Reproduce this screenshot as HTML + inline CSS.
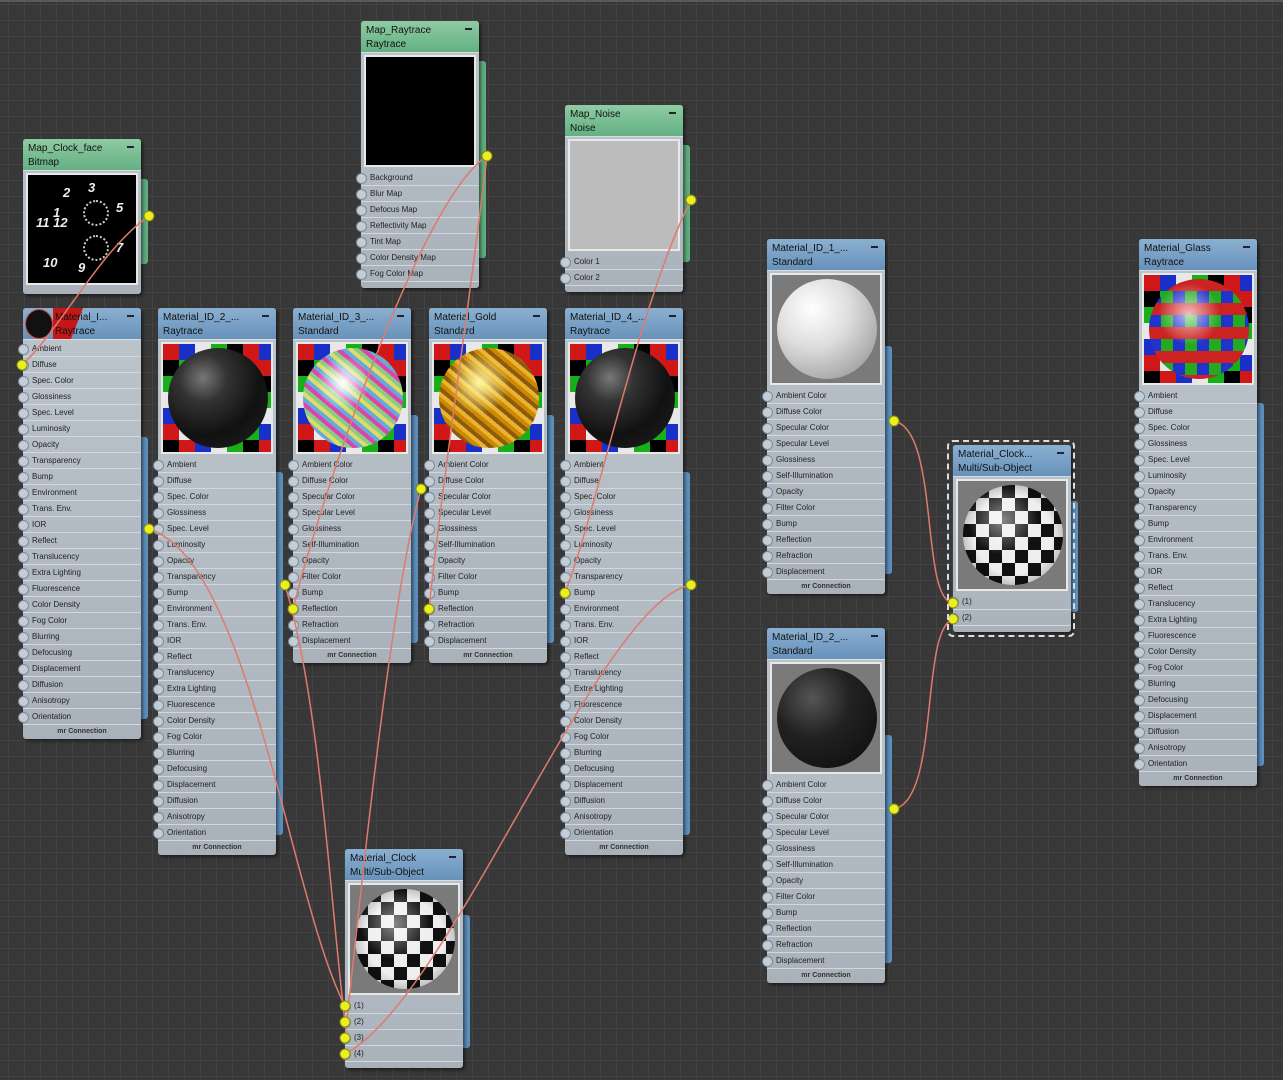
<!DOCTYPE html>
<html><head><meta charset="utf-8">
<style>
html,body{margin:0;padding:0}
body{width:1283px;height:1080px;overflow:hidden;position:relative;
background-color:#383838;
background-image:linear-gradient(#424242 1px,transparent 1px),linear-gradient(90deg,#424242 1px,transparent 1px);
background-size:16px 16px;background-position:8px 4px;
font-family:"Liberation Sans",sans-serif;}
.top{position:absolute;left:0;top:0;width:1283px;height:2px;background:#5a5a5a}
.node{position:absolute;width:118px;background:linear-gradient(#bcc4cc,#a9b1ba);border-radius:3px;box-shadow:2px 2px 3px rgba(0,0,0,.5);}
.hd{height:32px;border-radius:3px 3px 0 0;background:linear-gradient(#8aafd0,#6892bb);border-bottom:1px solid #d6dde4;font-size:10px;color:#111;padding:3px 0 0 5px;box-sizing:border-box;line-height:14px;position:relative}
.hd.g{background:linear-gradient(#8fcba3,#64b083)}
.hd:after{content:"";position:absolute;right:7px;top:7px;width:7px;height:2px;background:#223}
.pv{margin:2px auto 0;width:112px;height:112px;box-sizing:border-box;border:2px solid #e8e8e8;position:relative;overflow:hidden}
.row{height:16px;font-size:8px;color:#222;line-height:16px;padding-left:9px;border-bottom:1px solid #d0d7de;box-sizing:border-box;position:relative}
.row:before{content:"";position:absolute;left:-5px;top:3px;width:9px;height:9px;border-radius:50%;background:#c3cdd8;border:1px solid #7b8a99}
.mr{height:14px;font-size:7px;text-align:center;line-height:14px;color:#333;font-weight:bold}
.tab{position:absolute;width:7px;background:#5c8fbc;border-radius:0 3px 3px 0}
.tab.g{background:#5fae7e}
.sph{position:absolute;border-radius:50%}
</style></head><body>
<div class="top"></div>
<div id="root"></div>
<svg width="1283" height="1080" style="position:absolute;left:0;top:0" fill="none" stroke="#e07a6c" stroke-width="1.5">
<path d="M149,216 C100,250 60,330 22,365"/>
<path d="M487,156 C420,200 320,500 293,609"/>
<path d="M487,156 C470,300 440,500 429,609"/>
<path d="M149,529 C250,560 290,900 345,1006"/>
<path d="M285,585 C320,700 330,900 345,1022"/>
<path d="M421,489 C390,600 360,900 345,1038"/>
<path d="M691,585 C600,600 450,1000 345,1054"/>
<path d="M691,200 C640,300 600,500 565,593"/>
<path d="M894,421 C940,430 920,600 953,603"/>
<path d="M894,809 C940,800 920,630 953,619"/>
<g fill="#e8f020" stroke="#8a8a10" stroke-width="1">
<circle cx="149" cy="216" r="5"/><circle cx="22" cy="365" r="5"/><circle cx="487" cy="156" r="5"/><circle cx="293" cy="609" r="5"/><circle cx="429" cy="609" r="5"/><circle cx="149" cy="529" r="5"/><circle cx="285" cy="585" r="5"/><circle cx="421" cy="489" r="5"/><circle cx="691" cy="585" r="5"/><circle cx="691" cy="200" r="5"/><circle cx="565" cy="593" r="5"/><circle cx="894" cy="421" r="5"/><circle cx="894" cy="809" r="5"/><circle cx="953" cy="603" r="5"/><circle cx="953" cy="619" r="5"/><circle cx="345" cy="1006" r="5"/><circle cx="345" cy="1022" r="5"/><circle cx="345" cy="1038" r="5"/><circle cx="345" cy="1054" r="5"/>
</g>
</svg>
<div style="position:absolute;left:947px;top:440px;width:128px;height:197px;border:2px dashed #ddd;border-radius:6px;box-sizing:border-box"></div>
<script>
const RT=["Ambient","Diffuse","Spec. Color","Glossiness","Spec. Level","Luminosity","Opacity","Transparency","Bump","Environment","Trans. Env.","IOR","Reflect","Translucency","Extra Lighting","Fluorescence","Color Density","Fog Color","Blurring","Defocusing","Displacement","Diffusion","Anisotropy","Orientation"];
const ST=["Ambient Color","Diffuse Color","Specular Color","Specular Level","Glossiness","Self-Illumination","Opacity","Filter Color","Bump","Reflection","Refraction","Displacement"];
const RM=["Background","Blur Map","Defocus Map","Reflectivity Map","Tint Map","Color Density Map","Fog Color Map"];
function checker(){let s='';const c=['#d01818','#18b018','#1830c8','#000','#e8e8e8'];for(let i=0;i<7;i++)for(let j=0;j<7;j++){s+=`<div style="position:absolute;left:${j*16}px;top:${i*16}px;width:16px;height:16px;background:${c[(i*3+j*2+((i*j)%3))%5]}"></div>`;}return s;}
const SP={
 dark:'radial-gradient(circle at 35% 30%,#777 0,#333 25%,#111 60%,#222 100%)',
 rainbow:'radial-gradient(circle at 40% 35%,#fff 0,rgba(255,255,255,0) 30%),repeating-linear-gradient(40deg,#d4a 0 4px,#6ad 4px 8px,#dd6 8px 12px,#8c8 12px 16px)',
 gold:'radial-gradient(circle at 40% 35%,#fff6a0 0,rgba(255,220,0,0) 35%),repeating-linear-gradient(40deg,#c80 0 4px,#e9b330 4px 8px,#8a5a10 8px 12px)',
 white:'radial-gradient(circle at 35% 30%,#fff 0,#ddd 40%,#888 100%)',
 black:'radial-gradient(circle at 35% 30%,#555 0,#222 40%,#0a0a0a 100%)',
 check:'radial-gradient(circle at 40% 35%,rgba(255,255,255,.5) 0,rgba(255,255,255,0) 40%),radial-gradient(circle at 50% 50%,rgba(0,0,0,0) 55%,rgba(0,0,0,.5) 100%),repeating-conic-gradient(#111 0 25%,#eee 0 50%) 0 0/26px 26px',
 glass:'radial-gradient(circle at 40% 35%,rgba(255,255,255,.7) 0,rgba(255,255,255,0) 35%),repeating-conic-gradient(#c22 0 25%,#2a2 0 50%,#23c 0 75%) 0 0/24px 24px'
};
function pv(type){
 if(type=='clock')return `<div class="pv" style="background:#000;color:#eee;font-size:13px;font-style:italic;font-weight:bold"><span style="position:absolute;left:8px;top:40px">11 12</span><span style="position:absolute;left:25px;top:30px">1</span><span style="position:absolute;left:35px;top:10px">2</span><span style="position:absolute;left:60px;top:5px">3</span><span style="position:absolute;left:88px;top:25px">5</span><span style="position:absolute;left:15px;top:80px">10</span><span style="position:absolute;left:50px;top:85px">9</span><span style="position:absolute;left:88px;top:65px">7</span><div style="position:absolute;left:55px;top:25px;width:22px;height:22px;border:2px dotted #ccc;border-radius:50%"></div><div style="position:absolute;left:55px;top:60px;width:22px;height:22px;border:2px dotted #ccc;border-radius:50%"></div></div>`;
 if(type=='blackmap')return `<div class="pv" style="background:#000"></div>`;
 if(type=='noise')return `<div class="pv" style="background:#bcbcbc"></div>`;
 let bg=['rainbow','gold','dark','glass'].includes(type)?'#fff':'#7a7a7a';
 let inner=['rainbow','gold','dark','glass'].includes(type)?checker():'';
 return `<div class="pv" style="background:${bg}">${inner}<div class="sph" style="left:5px;top:4px;width:100px;height:100px;background:${SP[type]}"></div></div>`;
}
const N=[
 [23,139,'Map_Clock_face','Bitmap',1,'clock',[],0],
 [361,21,'Map_Raytrace','Raytrace',1,'blackmap',RM,0],
 [565,105,'Map_Noise','Noise',1,'noise',['Color 1','Color 2'],0],
 [23,308,'Material_I...','Raytrace',0,null,RT,1],
 [158,308,'Material_ID_2_...','Raytrace',0,'dark',RT,1],
 [293,308,'Material_ID_3_...','Standard',0,'rainbow',ST,1],
 [429,308,'Material_Gold','Standard',0,'gold',ST,1],
 [565,308,'Material_ID_4_...','Raytrace',0,'dark',RT,1],
 [767,239,'Material_ID_1_...','Standard',0,'white',ST,1],
 [767,628,'Material_ID_2_...','Standard',0,'black',ST,1],
 [953,445,'Material_Clock...','Multi/Sub-Object',0,'check',['(1)','(2)'],0],
 [345,849,'Material_Clock','Multi/Sub-Object',0,'check',['(1)','(2)','(3)','(4)'],0],
 [1139,239,'Material_Glass','Raytrace',0,'glass',RT,1]
];
let h='';
for(const [x,y,t1,t2,g,p,rows,mr] of N){
 let body='';
 let hdx='';
 if(p===null)hdx=`<div style="position:absolute;left:2px;top:1px;width:26px;height:28px;background:#111;border:1px solid #c44;border-radius:50%"></div><div style="position:absolute;left:30px;top:0;width:30px;height:31px;background:#c41818;clip-path:polygon(0 0,100% 0,60% 100%,0 100%)"></div>`;
 body+=`<div class="hd${g?' g':''}" style="${p===null?'padding-left:32px':''}">${hdx}<span style="position:relative">${t1}<br>${t2}</span></div>`;
 if(p)body+=pv(p);
 body+=`<div style="height:${p?3:1}px"></div>`;
 for(const r of rows)body+=`<div class="row">${r}</div>`;
 if(mr)body+=`<div class="mr">mr Connection</div>`;
 else body+='<div style="height:6px"></div>';
 h+=`<div class="node" style="left:${x}px;top:${y}px">${body}</div>`;
}
document.getElementById('root').innerHTML=h;
const nodes=document.querySelectorAll('.node');let tabs='';
nodes.forEach((n,i)=>{const x=n.offsetLeft+118,y=n.offsetTop,H=n.offsetHeight;const g=N[i][4];
 const t0=g?y+40:y+H*0.3, t1=g?y+H-30:y+H-20;
 tabs+=`<div class="tab${g?' g':''}" style="left:${x}px;top:${t0}px;height:${t1-t0}px"></div>`;});
document.getElementById('root').insertAdjacentHTML('afterbegin',tabs);
</script>
</body></html>
